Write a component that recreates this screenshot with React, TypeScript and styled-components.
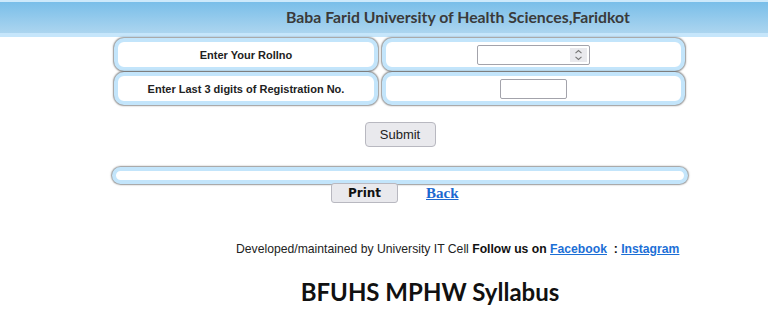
import React from "react";
import styled, { createGlobalStyle } from "styled-components";

const Global = createGlobalStyle`
  html, body { margin: 0; padding: 0; background: #fff; }
  body { font-family: "Liberation Sans", Arial, sans-serif; width: 768px; height: 328px; overflow: hidden; }
`;

const Header = styled.div`
  height: 37px;
  box-sizing: border-box;
  border-top: 2px solid #cde9fb;
  border-bottom: 4px solid #c6e6fb;
  background: linear-gradient(#79bee9, #acd5ef);
  display: flex;
  align-items: center;
  justify-content: center;
  padding-left: 148px;
  padding-bottom: 2px;
  font-family: Lato, "Open Sans", sans-serif;
  font-weight: 700;
  font-size: 15.8px;
  color: #3a3a3a;
`;

const FormGrid = styled.div`
  margin: 1px 0 0 114px;
  width: 571px;
  display: grid;
  grid-template-columns: 264px 303px;
  grid-auto-rows: 33px;
  column-gap: 4px;
  row-gap: 1px;
`;

const Cell = styled.div`
  box-sizing: border-box;
  background: #fff;
  border: 4px solid #c3e5fb;
  border-radius: 10px;
  box-shadow: 0 0 1.5px 1px rgba(80, 80, 80, 0.6);
  display: flex;
  align-items: center;
  justify-content: center;
`;

const Label = styled(Cell)`
  font-size: 11px;
  font-weight: 700;
  color: #222;
`;

const NumberBox = styled.div`
  width: 113px;
  height: 20px;
  box-sizing: border-box;
  border: 1px solid #a3a3ab;
  border-radius: 2px;
  display: flex;
  align-items: stretch;
  background: #fff;
`;

const PlainInput = styled.input`
  flex: 1;
  min-width: 0;
  border: none;
  outline: none;
  padding: 0 3px;
  font-size: 13px;
  background: transparent;
`;

const Spinner = styled.div`
  width: 17px;
  margin: 2px 2px 2px 0;
  background: #e9e9ed;
  display: flex;
  align-items: center;
  justify-content: center;
`;

const TextInput = styled.input`
  width: 67px;
  height: 20px;
  box-sizing: border-box;
  border: 1px solid #a3a3ab;
  border-radius: 2px;
  outline: none;
  padding: 0 3px;
`;

const Center = styled.div<{ $top: number; $shift: number }>`
  display: flex;
  justify-content: center;
  margin-top: ${(p) => p.$top}px;
  padding-left: ${(p) => p.$shift}px;
`;

const Button = styled.button`
  width: 71px;
  height: 25px;
  box-sizing: border-box;
  background: #e9e9ed;
  border: 1px solid #b8b8c0;
  border-radius: 4px;
  font-family: "Liberation Sans", Arial, sans-serif;
  font-size: 13px;
  color: #222;
  padding: 0;
`;

const Bar = styled.div`
  margin: 20px 0 0 112px;
  width: 576px;
  height: 17px;
  box-sizing: border-box;
  border: 4px solid #c3e5fb;
  border-radius: 9px;
  background: #fff;
  box-shadow: 0 0 1.5px 1px rgba(80, 80, 80, 0.6);
`;

const PrintRow = styled.div`
  display: flex;
  align-items: center;
  margin: -1px 0 0 331px;
  height: 20px;
  gap: 28px;
`;

const PrintButton = styled.button`
  width: 67px;
  height: 20px;
  box-sizing: border-box;
  background: #e9e9ed;
  border: 1px solid #b8b8c0;
  border-radius: 3px;
  font-family: "DejaVu Sans", Verdana, sans-serif;
  font-weight: 700;
  font-size: 12px;
  color: #111;
  padding: 0;
`;

const BackLink = styled.a`
  font-family: "Liberation Serif", "Times New Roman", serif;
  font-weight: 700;
  font-size: 15px;
  color: #1c68d0;
  text-decoration: underline;
  margin-top: 1px;
`;

const Footer = styled.div`
  margin: 39px 0 0 236px;
  font-size: 12.2px;
  color: #222;
  white-space: pre;
  line-height: 15px;
`;

const Bold = styled.b`
  color: #111;
`;

const FootLink = styled.a`
  color: #1c6fd6;
  font-weight: 700;
  text-decoration: underline;
`;

const Title = styled.h1`
  margin: 19px 0 0;
  padding-left: 92px;
  text-align: center;
  font-family: Lato, "Open Sans", sans-serif;
  font-weight: 700;
  font-size: 24px;
  line-height: 32px;
  color: #111;
`;

const Chevrons = () => (
  <svg width="9" height="12" viewBox="0 0 9 12" fill="none" stroke="#777" strokeWidth="1.1">
    <path d="M1.5 4.2 L4.5 1.5 L7.5 4.2" />
    <path d="M1.5 7.8 L4.5 10.5 L7.5 7.8" />
  </svg>
);

export default function App() {
  return (
    <>
      <Global />
      <Header>Baba Farid University of Health Sciences,Faridkot</Header>
      <FormGrid>
        <Label>Enter Your Rollno</Label>
        <Cell>
          <NumberBox>
            <PlainInput type="text" />
            <Spinner>
              <Chevrons />
            </Spinner>
          </NumberBox>
        </Cell>
        <Label>Enter Last 3 digits of Registration No.</Label>
        <Cell>
          <TextInput type="text" />
        </Cell>
      </FormGrid>
      <Center $top={17} $shift={32}>
        <Button>Submit</Button>
      </Center>
      <Bar />
      <PrintRow>
        <PrintButton>Print</PrintButton>
        <BackLink href="#">Back</BackLink>
      </PrintRow>
      <Footer>
        Developed/maintained by University IT Cell <Bold>Follow us on </Bold>
        <FootLink href="#">Facebook</FootLink>
        <Bold>{"  : "}</Bold>
        <FootLink href="#">Instagram</FootLink>
      </Footer>
      <Title>BFUHS MPHW Syllabus</Title>
    </>
  );
}
